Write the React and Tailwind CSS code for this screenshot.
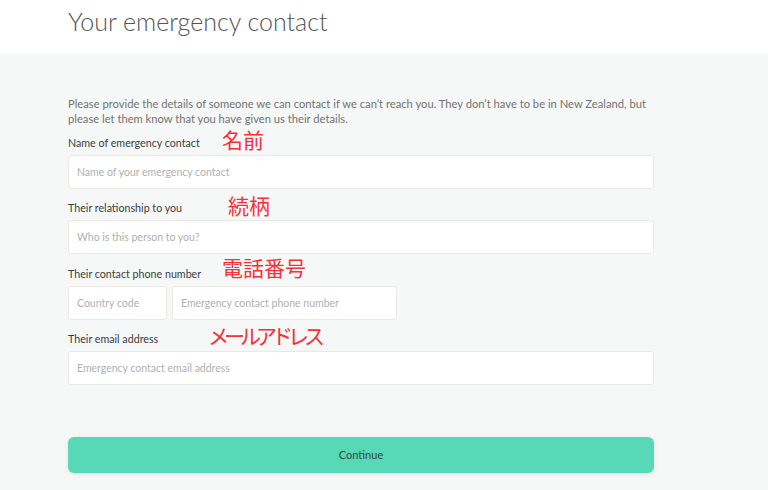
const Field = ({ label, note, noteClass, children }) => (
  <div className="flex flex-col">
    <div className="relative h-[14px] mb-[5px] leading-[14px]">
      <span className="block text-[10.7px] leading-[14px] text-[#3c3c3c]">{label}</span>
      <span
        className={`absolute text-[21px] leading-[22px] text-[#f2323a] ${noteClass}`}
        style={{ fontFamily: '"Noto Sans CJK JP", sans-serif' }}
      >
        {note}
      </span>
    </div>
    {children}
  </div>
);

const Input = ({ placeholder, className = "" }) => (
  <input
    type="text"
    placeholder={placeholder}
    className={`h-[34px] bg-white border border-[#ebe8e4] rounded-[3px] px-[8px] text-[10.5px] text-[#444] placeholder:text-[#b0b0b0] focus:outline-none ${className}`}
  />
);

const App = () => {
  return (
    <div className="min-h-screen bg-[#f5f8f7]" style={{ fontFamily: 'Lato, "Noto Sans", sans-serif' }}>
      {/* header */}
      <div className="h-[54px] bg-white pl-[68px] pt-[5px]">
        <h1 className="text-[25px] leading-[32px] font-light text-[#555]">Your emergency contact</h1>
      </div>

      <div className="pl-[68px] pt-[42px] w-[654px]">
        <p className="text-[11.2px] leading-[15px] text-[#737373] w-[586px]">
          Please provide the details of someone we can contact if we can’t reach you. They don’t have to be in New Zealand, but
          please let them know that you have given us their details.
        </p>

        <div className="mt-[10px] flex flex-col gap-[12.4px]">
          <Field label="Name of emergency contact" note="名前" noteClass="left-[154px] top-[-8px]">
            <Input placeholder="Name of your emergency contact" className="w-[586px]" />
          </Field>
          <Field label="Their relationship to you" note="続柄" noteClass="left-[160px] top-[-7px]">
            <Input placeholder="Who is this person to you?" className="w-[586px]" />
          </Field>
          <Field label="Their contact phone number" note="電話番号" noteClass="left-[154px] top-[-11px]">
            <div className="flex gap-[5px]">
              <Input placeholder="Country code" className="w-[99px]" />
              <Input placeholder="Emergency contact phone number" className="w-[225px]" />
            </div>
          </Field>
          <Field label="Their email address" note="メールアドレス" noteClass="left-[140px] top-[-8px] tracking-[-5px]">
            <Input placeholder="Emergency contact email address" className="w-[586px]" />
          </Field>
        </div>

        <button
          type="button"
          className="mt-[52px] w-[586px] h-[36px] rounded-[6px] bg-[#57d9b7] text-[11px] text-[#34463f] shadow-[0_1px_6px_rgba(0,0,0,0.08)]"
        >
          Continue
        </button>
      </div>
    </div>
  );
};

export default App;
